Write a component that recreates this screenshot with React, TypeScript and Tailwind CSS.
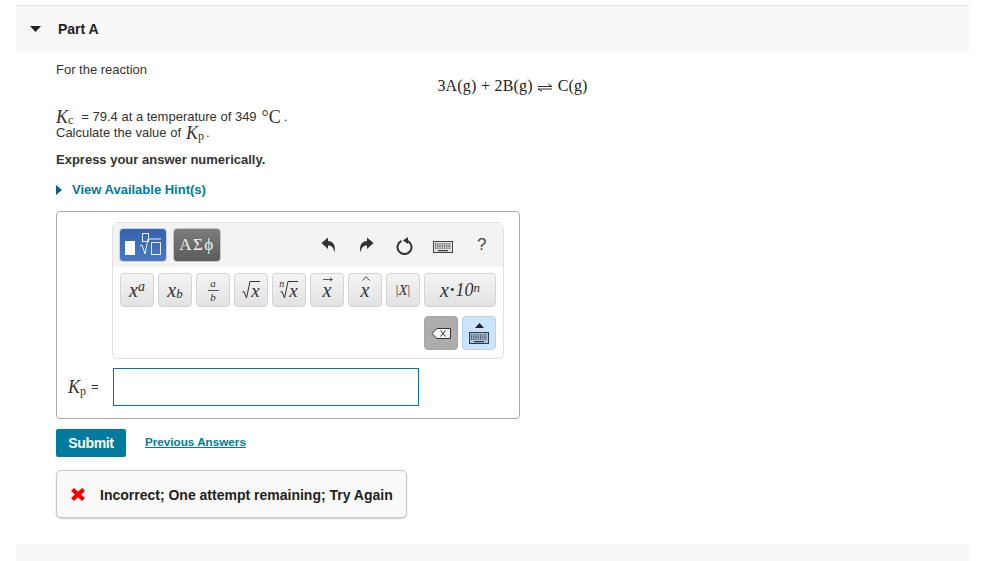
import React from "react";

const serif = "font-['Liberation_Serif','DejaVu_Serif',serif]";

function MathBtn({ children, wide }: { children: React.ReactNode; wide?: boolean }) {
  return (
    <div
      className={`flex h-[34px] items-center justify-center rounded-[4px] border border-[#d4d4d4] bg-gradient-to-b from-[#f4f4f4] to-[#e2e2e2] text-[#333] ${serif} italic ${wide ? "w-[72px]" : "w-[34px]"}`}
    >
      {children}
    </div>
  );
}

function Kbd({ dark }: { dark?: boolean }) {
  const c = dark ? "#2f3b4a" : "#444";
  return (
    <svg width="20" height="12" viewBox="0 0 20 12">
      <rect x="0.5" y="0.5" width="19" height="11" fill={dark ? "#a9c3da" : "#e2e2e2"} stroke={c} />
      {[2.8, 5, 7.2].map((y) => (
        <line key={y} x1="2" x2="18" y1={y} y2={y} stroke={c} strokeWidth="1.3" strokeDasharray="1 0.8" />
      ))}
      <line x1="5" x2="15" y1="9.6" y2="9.6" stroke={c} strokeWidth="1.2" />
    </svg>
  );
}

export default function App() {
  return (
    <div className="h-[561px] w-[995px] overflow-hidden bg-white pl-[16px] pt-[5px] font-['Liberation_Sans',Arial,sans-serif] text-[13px] leading-[16px] text-[#333]">
      <div className="w-[953px]">
        <div className="flex h-[47px] items-center border-t border-[#e3e3e3] bg-[#f8f8f8]">
          <svg width="11" height="6" viewBox="0 0 11 6" className="ml-[14px]">
            <path d="M0 0H11L5.5 6Z" fill="#222" />
          </svg>
          <span className="ml-[17px] text-[14px] font-bold text-[#222]">Part A</span>
        </div>

        <div className="pl-[40px]">
          <p className="mt-[10px]">For the reaction</p>
          <div className={`flex h-[16px] w-[913px] justify-center ${serif} text-[16px] leading-[16px] tracking-[0.15px] text-[#222]`}>
            <span className="flex items-center gap-[4.5px]">
              <span>3A(g)</span>
              <span>+</span>
              <span>2B(g)</span>
              <svg width="16" height="9" viewBox="0 0 16 9" className="mt-[3px]">
                <path d="M1 3.5H15L11 0.8M15 6H1L5 8.3" fill="none" stroke="#333" strokeWidth="1" />
              </svg>
              <span>C(g)</span>
            </span>
          </div>

          <p className="mt-[15px] flex h-[16px] items-center">
            <span className={`${serif} text-[18px] italic`}>K</span>
            <span className={`${serif} mt-[5px] text-[12px]`}>c</span>
            <span className="ml-[8px]">= 79.4 at a temperature of 349</span>
            <span className={`${serif} ml-[5px] text-[18px]`}>°C</span>
            <span className="ml-[3px]">.</span>
          </p>
          <p className="flex h-[16px] items-center">
            <span>Calculate the value of</span>
            <span className={`${serif} ml-[5px] text-[18px] italic`}>K</span>
            <span className={`${serif} mt-[6px] text-[12px]`}>p</span>
            <span className="ml-[2px]">.</span>
          </p>
          <p className="mt-[11px] font-bold">Express your answer numerically.</p>
          <div className="mt-[14px] flex items-center font-bold text-[#007b9e]">
            <svg width="6" height="10" viewBox="0 0 6 10" className="mr-[10px]">
              <path d="M0 0L6 5L0 10Z" fill="#00607e" />
            </svg>
            View Available Hint(s)
          </div>

          <div className="mt-[13px] h-[208px] w-[464px] rounded-[4px] border border-[#aaa] bg-white pl-[55px] pt-[10px]">
            <div className="h-[137px] w-[392px] overflow-hidden rounded-[6px] border border-[#e2e2e2]">
              <div className="flex h-[44px] items-center bg-[#f3f3f3] pl-[6px]">
                <div className="flex h-[34px] w-[48px] items-end justify-center gap-[4px] rounded-[4px] border border-[#c9d4e6] bg-gradient-to-b from-[#3563ae] to-[#4a79c4] pb-[6px]">
                  <div className="h-[14px] w-[10px] bg-white" />
                  <svg width="23" height="22" viewBox="0 0 23 22" fill="none" stroke="#e8eef8" strokeWidth="1">
                    <rect x="3.5" y="0.5" width="6" height="8" />
                    <path d="M1 13L3 12L6 21L9 6H22" />
                    <rect x="12.5" y="9.5" width="9" height="12" />
                  </svg>
                </div>
                <div className={`ml-[6px] flex h-[34px] w-[48px] items-center justify-center rounded-[4px] border border-[#c4c4c4] bg-gradient-to-b from-[#7c7c7c] to-[#5c5c5c] ${serif} text-[17px] tracking-[1.5px] text-[#f2f2f2]`}>
                  ΑΣϕ
                </div>
                <svg width="15" height="16" viewBox="0 0 15 16" className="ml-[100px]">
                  <path d="M0.5 6L7 0.5V4C12 4 15 8 13.5 15.5C12.5 11 11 8.5 7 8.5V12Z" fill="#333" />
                </svg>
                <svg width="15" height="16" viewBox="0 0 15 16" className="ml-[23px]">
                  <path d="M14.5 6L8 0.5V4C3 4 0 8 1.5 15.5C2.5 11 4 8.5 8 8.5V12Z" fill="#333" />
                </svg>
                <svg width="17" height="18" viewBox="0 0 17 18" className="ml-[22px] mt-[1px]" fill="none">
                  <path d="M5.5 3.8A7 7 0 1 0 11.5 3.8" stroke="#333" strokeWidth="2" />
                  <path d="M12 0V7L7 3.5Z" fill="#333" />
                </svg>
                <div className="ml-[20px] mt-[3px] flex">
                  <Kbd />
                </div>
                <span className="ml-[24px] text-[17px] text-[#444]">?</span>
              </div>

              <div className="flex gap-[4px] pl-[7px] pt-[6px]">
                <MathBtn>
                  <span className="text-[20px] leading-none">x</span>
                  <span className="mb-[6px] text-[14px] leading-none">a</span>
                </MathBtn>
                <MathBtn>
                  <span className="text-[20px] leading-none">x</span>
                  <span className="mt-[7px] text-[13px] leading-none">b</span>
                </MathBtn>
                <MathBtn>
                  <span className="flex flex-col items-center text-[11px] leading-[13px]">
                    <span className="w-[11px] border-b border-[#555] text-center">a</span>
                    <span>b</span>
                  </span>
                </MathBtn>
                <MathBtn>
                  <span className="flex items-end">
                    <svg width="9" height="18" viewBox="0 0 9 18" fill="none" stroke="#333">
                      <path d="M0.5 11L2 10.5L4.5 17L8 0.5H9" />
                    </svg>
                    <span className="border-t border-[#333] text-[19px] leading-[17px]">x</span>
                  </span>
                </MathBtn>
                <MathBtn>
                  <span className="relative flex items-end">
                    <span className="absolute left-[-1px] top-[-2px] text-[10px] leading-none">n</span>
                    <svg width="9" height="18" viewBox="0 0 9 18" fill="none" stroke="#333">
                      <path d="M0.5 11L2 10.5L4.5 17L8 0.5H9" />
                    </svg>
                    <span className="border-t border-[#333] text-[19px] leading-[17px]">x</span>
                  </span>
                </MathBtn>
                <MathBtn>
                  <span className="relative text-[20px] leading-none">
                    x
                    <svg width="10" height="5" viewBox="0 0 10 5" className="absolute left-[0px] top-[-3px]" fill="none" stroke="#333" strokeWidth="0.8">
                      <path d="M0 2.5H9M7 0.8L9.5 2.5L7 4.2" />
                    </svg>
                  </span>
                </MathBtn>
                <MathBtn>
                  <span className="relative text-[20px] leading-none">
                    x
                    <svg width="8" height="5" viewBox="0 0 8 5" className="absolute left-[1px] top-[-4px]" fill="none" stroke="#333" strokeWidth="0.9">
                      <path d="M0.5 4.5L4 0.8L7.5 4.5" />
                    </svg>
                  </span>
                </MathBtn>
                <MathBtn>
                  <span className="text-[13px] not-italic">|</span>
                  <span className="text-[15px]">X</span>
                  <span className="text-[13px] not-italic">|</span>
                </MathBtn>
                <MathBtn wide>
                  <span className="text-[20px] leading-none">x</span>
                  <span className="mx-[1px] text-[13px] not-italic">•</span>
                  <span className="text-[18px] leading-none">10</span>
                  <span className="mb-[6px] text-[13px] leading-none">n</span>
                </MathBtn>
              </div>

              <div className="mt-[9px] flex justify-end gap-[4px] pr-[7px]">
                <div className="flex h-[34px] w-[34px] items-center justify-center rounded-[4px] border border-[#a5a5a5] bg-[#adadad]">
                  <svg width="20" height="11" viewBox="0 0 20 11">
                    <path d="M6 0.5H19.5V10.5H6L0.8 5.5Z" fill="#f4f4f4" stroke="#333" />
                    <path d="M9.5 2.5L14.5 8.5M14.5 2.5L9.5 8.5" stroke="#333" strokeWidth="1" />
                  </svg>
                </div>
                <div className="flex h-[34px] w-[34px] flex-col items-center justify-center gap-[4px] rounded-[4px] border border-[#b6d4ee] bg-[#cbe4fb]">
                  <svg width="9" height="5" viewBox="0 0 9 5">
                    <path d="M0 5L4.5 0L9 5Z" fill="#222" />
                  </svg>
                  <Kbd dark />
                </div>
              </div>
            </div>

            <div className="mt-[9px] flex h-[38px] items-center">
              <span className="ml-[-44px] flex w-[45px] items-center">
                <span className={`${serif} text-[18px] italic`}>K</span>
                <span className={`${serif} mt-[7px] text-[12px]`}>p</span>
                <span className="ml-[5px] text-[13px]">=</span>
              </span>
              <div className="h-[38px] w-[306px] border border-[#007b9e] bg-white" />
            </div>
          </div>

          <div className="mt-[10px] flex items-center">
            <div className="flex h-[28px] w-[70px] items-center justify-center rounded-[2px] bg-[#007b9e] text-[14px] font-bold tracking-[-0.35px] text-white">
              Submit
            </div>
            <span className="mb-[2px] ml-[19px] text-[11.7px] font-bold text-[#007b9e] underline">Previous Answers</span>
          </div>

          <div className="mt-[13px] flex h-[48px] w-[351px] items-center rounded-[5px] border border-[#c8c8c8] bg-[#f9f9f9] pl-[14px] pt-[1px] shadow-[0_1px_2px_rgba(0,0,0,0.2)]">
            <svg width="14" height="13" viewBox="0 0 14 13">
              <path d="M1.5 1.5L12.5 11.5M12.5 1.5L1.5 11.5" stroke="#f40000" strokeWidth="4.2" />
            </svg>
            <span className="ml-[15px] text-[14px] font-bold text-[#222]">Incorrect; One attempt remaining; Try Again</span>
          </div>
        </div>

        <div className="mt-[26px] h-[17px] bg-[#f8f8f8]" />
      </div>
    </div>
  );
}
